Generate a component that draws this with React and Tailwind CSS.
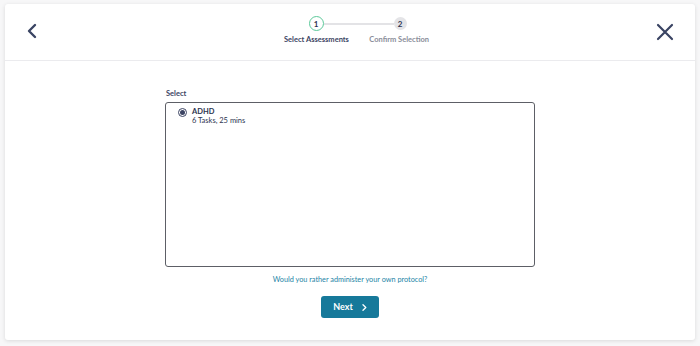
import React, { useState } from "react";

export default function App() {
  const [selected, setSelected] = useState("adhd");

  return (
    <div className="w-[700px] h-[346px] bg-[#f7f7f8] pt-[4px] px-[5px] font-['Lato',sans-serif]">
      <div className="bg-white h-[336px] rounded-[3px] shadow-[0_1px_4px_rgba(0,0,0,0.12)] flex flex-col">
        {/* header */}
        <div className="h-[57px] border-b border-[#ebebee] flex items-start px-[21px]">
          <button className="mt-[19px] w-[12px] text-[#3a4463]">
            <svg width="12" height="16" viewBox="0 0 12 16" fill="none">
              <path d="M9 2 L3 8 L9 14" stroke="currentColor" strokeWidth="2.4" strokeLinecap="round" strokeLinejoin="round" />
            </svg>
          </button>

          <div className="ml-[246px] mt-[12px] w-[145px] flex flex-col text-[7.5px] font-bold">
            <div className="flex items-center pl-[24.5px]">
              <div className="w-[15px] h-[15px] rounded-full border-[1.5px] border-[#5cc99a] flex items-center justify-center text-[8px] text-[#2d3450] bg-white">1</div>
              <div className="w-[70px] h-[2px] bg-[#e3e3e6]" />
              <div className="w-[13px] h-[13px] rounded-full bg-[#e4e4e7] flex items-center justify-center text-[8px] text-[#2d3450]">2</div>
            </div>
            <div className="flex justify-between mt-[3px] whitespace-nowrap">
              <span className="text-[#3c4463]">Select Assessments</span>
              <span className="text-[#8a8d99]">Confirm Selection</span>
            </div>
          </div>

          <button className="ml-auto mt-[19px] text-[#3a4463]">
            <svg width="18" height="18" viewBox="0 0 18 18" fill="none">
              <path d="M2 2 L16 16 M16 2 L2 16" stroke="currentColor" strokeWidth="2.2" strokeLinecap="round" />
            </svg>
          </button>
        </div>

        {/* body */}
        <div className="flex flex-col items-center pt-[27px]">
          <div className="w-[370px]">
            <div className="text-[7.5px] font-bold text-[#3c4463] mb-[3px] ml-[1px]">Select</div>
            <div className="h-[165px] border border-[#5d5f66] rounded-[3px] px-[12px] py-[4px]">
              <label className="flex items-start gap-[5px] cursor-pointer" onClick={() => setSelected("adhd")}>
                <span className="mt-[1px] w-[9px] h-[9px] rounded-full border border-[#3c4463] flex items-center justify-center">
                  {selected === "adhd" && <span className="w-[5px] h-[5px] rounded-full bg-[#3c4463]" />}
                </span>
                <span className="flex flex-col leading-[9px]">
                  <span className="text-[7.5px] font-bold text-[#2d3450]">ADHD</span>
                  <span className="text-[7.5px] text-[#2d3450]">6 Tasks, 25 mins</span>
                </span>
              </label>
            </div>
          </div>

          <a className="mt-[8px] text-[7.3px] text-[#1d84a6]">Would you rather administer your own protocol?</a>

          <button className="mt-[10px] w-[58px] h-[22px] rounded-[3px] bg-[#16799a] text-white text-[9px] font-bold flex items-center justify-center gap-[9px]">
            <span>Next</span>
            <svg width="5" height="7" viewBox="0 0 5 7" fill="none">
              <path d="M1 0.8 L3.8 3.5 L1 6.2" stroke="white" strokeWidth="1.3" strokeLinecap="round" strokeLinejoin="round" />
            </svg>
          </button>
        </div>
      </div>
    </div>
  );
}
